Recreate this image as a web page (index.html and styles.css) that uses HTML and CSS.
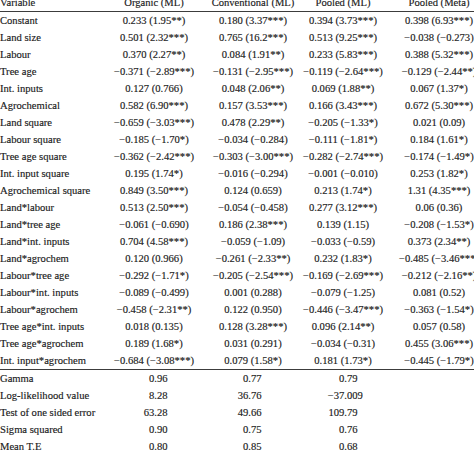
FILE: index.html
```html
<!DOCTYPE html>
<html>
<head>
<meta charset="utf-8">
<link rel="stylesheet" href="styles.css">
</head>
<body>
<div class="table">
  <div class="row head rule">
    <div class="lab">Variable</div><div class="c">Organic (ML)</div><div class="c">Conventional (ML)</div><div class="c">Pooled (ML)</div><div class="c">Pooled (Meta)</div>
  </div>
  <div class="row"><div class="lab">Constant</div><div class="c">0.233 (1.95**)</div><div class="c">0.180 (3.37***)</div><div class="c">0.394 (3.73***)</div><div class="c">0.398 (6.93***)</div></div>
  <div class="row"><div class="lab">Land size</div><div class="c">0.501 (2.32***)</div><div class="c">0.765 (16.2***)</div><div class="c">0.513 (9.25***)</div><div class="c">−0.038 (−0.273)</div></div>
  <div class="row"><div class="lab">Labour</div><div class="c">0.370 (2.27**)</div><div class="c">0.084 (1.91**)</div><div class="c">0.233 (5.83***)</div><div class="c">0.388 (5.32***)</div></div>
  <div class="row"><div class="lab">Tree age</div><div class="c">−0.371 (−2.89***)</div><div class="c">−0.131 (−2.95***)</div><div class="c">−0.119 (−2.64***)</div><div class="c">−0.129 (−2.44**)</div></div>
  <div class="row"><div class="lab">Int. inputs</div><div class="c">0.127 (0.766)</div><div class="c">0.048 (2.06**)</div><div class="c">0.069 (1.88**)</div><div class="c">0.067 (1.37*)</div></div>
  <div class="row"><div class="lab">Agrochemical</div><div class="c">0.582 (6.90***)</div><div class="c">0.157 (3.53***)</div><div class="c">0.166 (3.43***)</div><div class="c">0.672 (5.30***)</div></div>
  <div class="row"><div class="lab">Land square</div><div class="c">−0.659 (−3.03***)</div><div class="c">0.478 (2.29**)</div><div class="c">−0.205 (−1.33*)</div><div class="c">0.021 (0.09)</div></div>
  <div class="row"><div class="lab">Labour square</div><div class="c">−0.185 (−1.70*)</div><div class="c">−0.034 (−0.284)</div><div class="c">−0.111 (−1.81*)</div><div class="c">0.184 (1.61*)</div></div>
  <div class="row"><div class="lab">Tree age square</div><div class="c">−0.362 (−2.42***)</div><div class="c">−0.303 (−3.00***)</div><div class="c">−0.282 (−2.74***)</div><div class="c">−0.174 (−1.49*)</div></div>
  <div class="row"><div class="lab">Int. input square</div><div class="c">0.195 (1.74*)</div><div class="c">−0.016 (−0.294)</div><div class="c">−0.001 (−0.010)</div><div class="c">0.253 (1.82*)</div></div>
  <div class="row"><div class="lab">Agrochemical square</div><div class="c">0.849 (3.50***)</div><div class="c">0.124 (0.659)</div><div class="c">0.213 (1.74*)</div><div class="c">1.31 (4.35***)</div></div>
  <div class="row"><div class="lab">Land*labour</div><div class="c">0.513 (2.50***)</div><div class="c">−0.054 (−0.458)</div><div class="c">0.277 (3.12***)</div><div class="c">0.06 (0.36)</div></div>
  <div class="row"><div class="lab">Land*tree age</div><div class="c">−0.061 (−0.690)</div><div class="c">0.186 (2.38***)</div><div class="c">0.139 (1.15)</div><div class="c">−0.208 (−1.53*)</div></div>
  <div class="row"><div class="lab">Land*int. inputs</div><div class="c">0.704 (4.58***)</div><div class="c">−0.059 (−1.09)</div><div class="c">−0.033 (−0.59)</div><div class="c">0.373 (2.34**)</div></div>
  <div class="row"><div class="lab">Land*agrochem</div><div class="c">0.120 (0.966)</div><div class="c">−0.261 (−2.33**)</div><div class="c">0.232 (1.83*)</div><div class="c">−0.485 (−3.46***)</div></div>
  <div class="row"><div class="lab">Labour*tree age</div><div class="c">−0.292 (−1.71*)</div><div class="c">−0.205 (−2.54***)</div><div class="c">−0.169 (−2.69***)</div><div class="c">−0.212 (−2.16**)</div></div>
  <div class="row"><div class="lab">Labour*int. inputs</div><div class="c">−0.089 (−0.499)</div><div class="c">0.001 (0.288)</div><div class="c">−0.079 (−1.25)</div><div class="c">0.081 (0.52)</div></div>
  <div class="row"><div class="lab">Labour*agrochem</div><div class="c">−0.458 (−2.31**)</div><div class="c">0.122 (0.950)</div><div class="c">−0.446 (−3.47***)</div><div class="c">−0.363 (−1.54*)</div></div>
  <div class="row"><div class="lab">Tree age*int. inputs</div><div class="c">0.018 (0.135)</div><div class="c">0.128 (3.28***)</div><div class="c">0.096 (2.14**)</div><div class="c">0.057 (0.58)</div></div>
  <div class="row"><div class="lab">Tree age*agrochem</div><div class="c">0.189 (1.68*)</div><div class="c">0.031 (0.291)</div><div class="c">−0.034 (−0.31)</div><div class="c">0.455 (3.06***)</div></div>
  <div class="row rule"><div class="lab">Int. input*agrochem</div><div class="c">−0.684 (−3.08***)</div><div class="c">0.079 (1.58*)</div><div class="c">0.181 (1.73*)</div><div class="c">−0.445 (−1.79*)</div></div>
  <div class="row"><div class="lab">Gamma</div><div class="d d1"><span class="i">0.</span>96</div><div class="d d2"><span class="i">0.</span>77</div><div class="d d3"><span class="i">0.</span>79</div><div class="c"></div></div>
  <div class="row"><div class="lab">Log-likelihood value</div><div class="d d1"><span class="i">8.</span>28</div><div class="d d2"><span class="i">36.</span>76</div><div class="d d3"><span class="i">−37.</span>009</div><div class="c"></div></div>
  <div class="row"><div class="lab">Test of one sided error</div><div class="d d1"><span class="i">63.</span>28</div><div class="d d2"><span class="i">49.</span>66</div><div class="d d3"><span class="i">109.</span>79</div><div class="c"></div></div>
  <div class="row"><div class="lab">Sigma squared</div><div class="d d1"><span class="i">0.</span>90</div><div class="d d2"><span class="i">0.</span>75</div><div class="d d3"><span class="i">0.</span>76</div><div class="c"></div></div>
  <div class="row"><div class="lab">Mean T.E</div><div class="d d1"><span class="i">0.</span>80</div><div class="d d2"><span class="i">0.</span>85</div><div class="d d3"><span class="i">0.</span>68</div><div class="c"></div></div>
</div>
</body>
</html>
```
FILE: styles.css
```css
html, body {
  margin: 0;
  padding: 0;
  background: #ffffff;
  overflow: hidden;
}
body {
  width: 474px;
  height: 452px;
}
.table {
  width: 494px;
  margin-top: -5px;
  display: flex;
  flex-direction: column;
  font-family: "Liberation Serif", "Times New Roman", serif;
  font-size: 10.6px;
  color: #1a1a1a;
  -webkit-text-stroke: 0.15px #1a1a1a;
}
.row {
  display: grid;
  grid-template-columns: 104px 100px 98px 82px 110px;
  height: 17px;
  line-height: 17px;
  box-sizing: border-box;
  white-space: nowrap;
}
.row.head {
  height: 17px;
  line-height: 16px;
}
.row.rule {
  border-bottom: 1px solid #3c3c3c;
}
.row.rule:not(.head) {
  height: 18px;
}
.lab {
  text-align: left;
}
.c {
  text-align: center;
}
.d {
  display: flex;
}
.d .i {
  text-align: right;
  flex: none;
}
.d1 .i { width: 53px; }
.d2 .i { width: 47px; }
.d3 .i { width: 45px; }
```
